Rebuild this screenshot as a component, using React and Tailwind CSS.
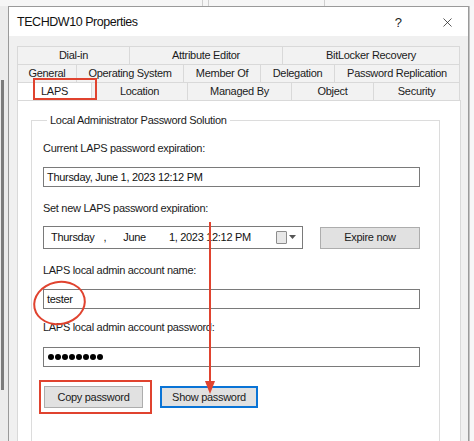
import React from 'react'
import { X } from 'lucide-react'

const rows = [
	[
		{ label: 'Dial-in', w: 113 },
		{ label: 'Attribute Editor', w: 153 },
		{ label: 'BitLocker Recovery', w: 177 },
	],
	[
		{ label: 'General', w: 60 },
		{ label: 'Operating System', w: 107 },
		{ label: 'Member Of', w: 77 },
		{ label: 'Delegation', w: 74 },
		{ label: 'Password Replication', w: 125 },
	],
	[
		{ label: 'LAPS', w: 75, active: true },
		{ label: 'Location', w: 96 },
		{ label: 'Managed By', w: 104 },
		{ label: 'Object', w: 82 },
		{ label: 'Security', w: 86 },
	],
]

const Label = ({ children, className = '' }) => (
	<div className={`shrink-0 h-[14px] leading-[14px] text-[11px] tracking-[-0.3px] text-[#1b1b1b] ${className}`}>{children}</div>
)

const TextBox = ({ children, className = '' }) => (
	<div className={`shrink-0 h-[20px] w-[377px] border border-[#7a7a7a] bg-white flex items-center pl-[3px] text-[11px] tracking-[-0.3px] text-[#111] ${className}`}>{children}</div>
)

const Button = ({ children, className = '' }) => (
	<div className={`shrink-0 h-[22px] flex items-center justify-center bg-[#e1e1e1] text-[11px] tracking-[-0.3px] text-[#1b1b1b] ${className}`}>{children}</div>
)

export default function App() {
	return (
		<div className="relative w-[474px] h-[441px] overflow-hidden bg-[#f4f4f4] flex flex-col font-['Liberation_Sans',Arial,sans-serif]">
			{/* window behind */}
			<div className="h-[6px] shrink-0 flex bg-[#f6f6f6]">
				<div className="w-[203px] border-r border-[#cfcfcf]" />
				<div className="w-[6px] border-r border-[#cfcfcf]" />
				<div className="w-[116px] border-r border-[#cfcfcf]" />
			</div>
			<div className="flex h-[435px] shrink-0">
				<div className="w-[8px] bg-[#ececec] flex flex-col">
					<div className="h-[74px] shrink-0" />
					<div className="h-[310px] shrink-0 w-[3px] ml-[1px] bg-[#7d7d7d]" />
				</div>
				{/* dialog */}
				<div className="w-[461px] border border-b-0 border-[#9a9a9a] flex flex-col bg-[#f0f0f0] overflow-hidden">
					<div className="h-[29px] shrink-0 bg-white flex items-center pl-[8px]">
						<span className="text-[12.5px] tracking-[-0.45px] text-[#111] mt-[2px]">TECHDW10 Properties</span>
						<span className="ml-auto text-[13px] text-[#222] mt-[2px]">?</span>
						<X size={15} strokeWidth={1.2} className="ml-[38px] mr-[13px] mt-[2px] text-[#222]" />
					</div>
					<div className="flex-1 pt-[10px] pl-[8px] pr-[7px] flex flex-col">
						{rows.map((row, i) => (
							<div key={i} className="flex h-[18px] shrink-0">
								{row.map(tab => (
									<div
										key={tab.label}
										style={{ width: tab.w }}
										className={`flex items-center justify-center border-t border-r first:border-l border-[#d9d9d9] text-[11px] tracking-[-0.3px] text-[#1b1b1b] ${tab.active ? 'bg-white' : 'bg-[#f2f2f2]'}`}
									>
										{tab.label}
									</div>
								))}
							</div>
						))}
						<div className="flex-1 bg-white border border-b-0 border-[#d9d9d9] pl-[13px] pr-[20px] pt-[12px]">
							<fieldset className="border border-[#dcdcdc] h-[340px] pl-[11px] flex flex-col">
								<legend className="ml-[4px] px-[3px] h-[14px] leading-[14px] text-[11px] tracking-[-0.3px] text-[#1b1b1b]">Local Administrator Password Solution</legend>
								<Label className="mt-[14px]">Current LAPS password expiration:</Label>
								<TextBox className="mt-[12px]">Thursday, June 1, 2023 12:12 PM</TextBox>
								<Label className="mt-[14px]">Set new LAPS password expiration:</Label>
								<div className="mt-[11px] shrink-0 flex items-center">
									<div className="h-[23px] w-[260px] border border-[#7a7a7a] bg-white flex items-center text-[11px] tracking-[-0.3px] text-[#111]">
										<span className="ml-[7px]">Thursday</span>
										<span className="ml-[9px]">,</span>
										<span className="ml-[17px]">June</span>
										<span className="ml-[23px]">1, 2023 12:12 PM</span>
										<span className="ml-[25px] w-[11px] h-[13px] border border-[#8d8d8d] bg-[#e8e8e8] rounded-[1px]" />
										<svg width="7" height="5" viewBox="0 0 7 5" className="ml-[2px]">
											<polygon points="0,0 7,0 3.5,4" fill="#555" />
										</svg>
									</div>
									<Button className="ml-[17px] w-[100px] h-[21px] border border-[#adadad]">Expire now</Button>
								</div>
								<Label className="mt-[14px]">LAPS local admin account name:</Label>
								<TextBox className="mt-[12px] pl-[1px]">tester</TextBox>
								<Label className="mt-[11px]">LAPS local admin account password:</Label>
								<TextBox className="mt-[13px]">
									<div className="flex gap-[1.5px] ml-[1px]">
										{Array.from({ length: 8 }).map((_, i) => (
											<span key={i} className="w-[5.5px] h-[5.5px] rounded-full bg-black" />
										))}
									</div>
								</TextBox>
								<div className="mt-[19px] shrink-0 flex items-center">
									<Button className="ml-[1px] w-[99px] border border-[#adadad]">Copy password</Button>
									<Button className="ml-[17px] w-[98px] border-2 border-[#0a74d6]">Show password</Button>
								</div>
							</fieldset>
						</div>
					</div>
				</div>
				<div className="w-[5px] bg-[#f7f7f7] border-l border-[#c4c4c4]" />
			</div>

			{/* annotations */}
			<div className="absolute left-[33px] top-[78px] w-[64px] h-[22px] border-2 border-[#e0432f]" />
			<div className="absolute left-[33px] top-[281px] w-[53px] h-[44px] rounded-[50%] border-2 border-[#e0432f] -rotate-[12deg]" />
			<div className="absolute left-[39px] top-[380px] w-[113px] h-[34px] border-2 border-[#e0432f]" />
			<svg className="absolute left-[203px] top-[220px]" width="14" height="176" viewBox="0 0 14 176">
				<line x1="7" y1="2" x2="7" y2="164" stroke="#e0432f" strokeWidth="2" />
				<polygon points="2,161 12,161 7,174" fill="#e0432f" />
			</svg>
		</div>
	)
}
